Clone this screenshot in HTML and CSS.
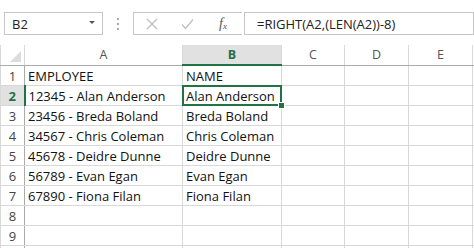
FILE: index.html
```html
<!DOCTYPE html>
<html lang="en">
<head>
    <meta charset="UTF-8">
    <title>Sheet</title>
    <link rel="stylesheet" href="styles.css">
</head>
<body>
    <div class="toolbar">
        <div class="namebox">
            <span>B2</span>
            <span class="arrow"></span>
        </div>
        <div class="dots"><i></i><i></i><i></i></div>
        <div class="buttons">
            <svg class="btn" width="12" height="12" viewBox="0 0 12 12"><path d="M1 1 L11 11 M11 1 L1 11" stroke="#bdbdbd" stroke-width="1.2" fill="none"/></svg>
            <svg class="btn" width="13" height="12" viewBox="0 0 13 12"><path d="M1 6.5 L4.5 10.5 L12 1.5" stroke="#bdbdbd" stroke-width="1.2" fill="none"/></svg>
            <span class="fx">f<sub>x</sub></span>
        </div>
        <div class="formula">=RIGHT(A2,(LEN(A2))-8)</div>
    </div>

    <table class="sheet">
        <colgroup>
            <col class="c-rh">
            <col class="c-a">
            <col class="c-b">
            <col class="c-c">
            <col class="c-d">
            <col class="c-e">
            <col class="c-f">
        </colgroup>
        <thead>
            <tr>
                <th class="corner"><span class="tri"></span></th>
                <th>A</th>
                <th class="sel">B</th>
                <th>C</th>
                <th>D</th>
                <th>E</th>
                <th></th>
            </tr>
        </thead>
        <tbody>
            <tr><th>1</th><td>EMPLOYEE</td><td>NAME</td><td></td><td></td><td></td><td></td></tr>
            <tr><th class="sel">2</th><td>12345 - Alan Anderson</td><td class="active">Alan Anderson<span class="frame"></span><span class="handle"></span></td><td></td><td></td><td></td><td></td></tr>
            <tr><th>3</th><td>23456 - Breda Boland</td><td>Breda Boland</td><td></td><td></td><td></td><td></td></tr>
            <tr><th>4</th><td>34567 - Chris Coleman</td><td>Chris Coleman</td><td></td><td></td><td></td><td></td></tr>
            <tr><th>5</th><td>45678 - Deidre Dunne</td><td>Deidre Dunne</td><td></td><td></td><td></td><td></td></tr>
            <tr><th>6</th><td>56789 - Evan Egan</td><td>Evan Egan</td><td></td><td></td><td></td><td></td></tr>
            <tr><th>7</th><td>67890 - Fiona Filan</td><td>Fiona Filan</td><td></td><td></td><td></td><td></td></tr>
            <tr><th>8</th><td></td><td></td><td></td><td></td><td></td><td></td></tr>
            <tr><th>9</th><td></td><td></td><td></td><td></td><td></td><td></td></tr>
            <tr><th></th><td></td><td></td><td></td><td></td><td></td><td></td></tr>
        </tbody>
    </table>
</body>
</html>
```

FILE: styles.css
```css
body {
    font-family: "Open Sans", Arial, sans-serif;
    margin: 0;
    padding: 0;
    background: #fff;
    overflow: hidden;
    width: 474px;
    height: 248px;
}
.toolbar {
    display: flex;
    align-items: stretch;
    height: 23px;
    padding: 12px 0 10px 4px;
}
.namebox {
    width: 99px;
    border: 1px solid #c6c6c6;
    display: flex;
    align-items: center;
    justify-content: space-between;
    padding: 0 7px 0 7px;
    box-sizing: border-box;
    font-size: 13px;
    color: #222;
}
.arrow {
    width: 0;
    height: 0;
    border-left: 3px solid transparent;
    border-right: 3px solid transparent;
    border-top: 3px solid #555;
    margin-bottom: 3px;
}
.dots {
    width: 30px;
    display: flex;
    flex-direction: column;
    align-items: center;
    justify-content: center;
    gap: 3px;
}
.dots i {
    width: 2px;
    height: 2px;
    background: #aaa;
}
.buttons {
    width: 109px;
    border: 1px solid #c6c6c6;
    border-right: none;
    display: flex;
    align-items: center;
    box-sizing: border-box;
    padding-left: 12px;
    gap: 23px;
}
.fx {
    font-family: "Liberation Serif", serif;
    font-style: italic;
    font-size: 14px;
    color: #555;
    margin-left: 2px;
}
.fx sub {
    font-size: 9px;
    vertical-align: -1px;
}
.formula {
    flex: 1;
    border: 1px solid #c6c6c6;
    margin-left: 2px;
    font-size: 13px;
    color: #222;
    padding-left: 12px;
    display: flex;
    align-items: center;
    white-space: nowrap;
}
.sheet {
    border-collapse: collapse;
    table-layout: fixed;
    width: 474px;
    font-size: 13px;
}
.c-rh { width: 24px; }
.c-a { width: 158px; }
.c-b { width: 99px; }
.c-c { width: 63px; }
.c-d { width: 64px; }
.c-e { width: 64px; }
.c-f { width: 2px; }
.sheet th, .sheet td {
    height: 19px;
    padding: 0 3px 0 3px;
    border: 1px solid #d8d8d8;
    white-space: nowrap;
    overflow: hidden;
    vertical-align: bottom;
    line-height: 17px;
}
.sheet thead th {
    font-weight: normal;
    font-size: 12.5px;
    color: #555;
    text-align: center;
    vertical-align: middle;
    border-top: none;
    border-bottom-color: #ababab;
}
.sheet tbody th {
    font-weight: normal;
    color: #444;
    text-align: center;
    padding: 0;
    border-right-color: #ababab;
}
.sheet td {
    color: #111;
}
.sheet thead th.sel {
    background: #e1e1e1;
    color: #217346;
    font-weight: bold;
    border-bottom: 2px solid #217346;
}
.sheet tbody th.sel {
    background: #e1e1e1;
    color: #217346;
    font-weight: bold;
    border-right: 2px solid #217346;
}
.corner {
    position: relative;
}
.tri {
    position: absolute;
    right: 3px;
    bottom: 3px;
    width: 0;
    height: 0;
    border-left: 11px solid transparent;
    border-bottom: 11px solid #dcdcdc;
}
.active {
    position: relative;
    overflow: visible !important;
}
.frame {
    position: absolute;
    left: -1px;
    top: -1px;
    right: -1px;
    bottom: -1px;
    border: 2px solid #217346;
}
.handle {
    position: absolute;
    right: -4px;
    bottom: -4px;
    width: 5px;
    height: 5px;
    background: #217346;
    border: 1px solid #fff;
}
```
